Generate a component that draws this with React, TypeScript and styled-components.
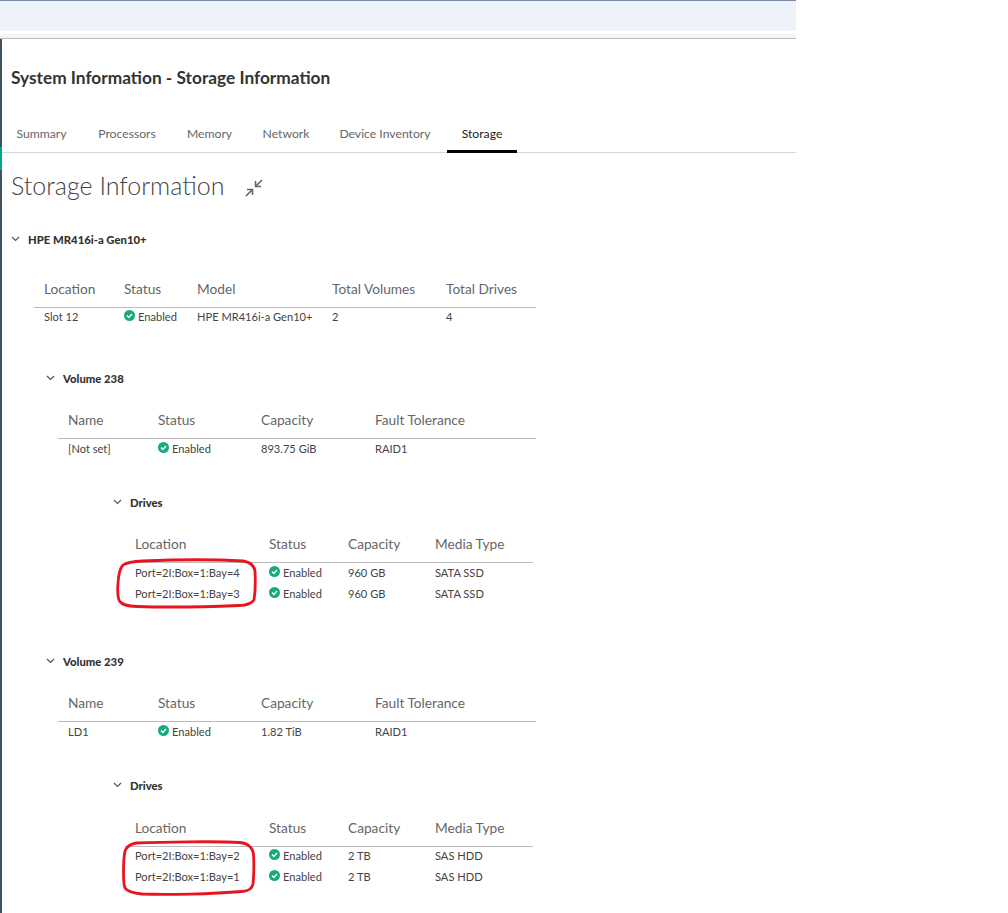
import React from "react";
import styled, { createGlobalStyle } from "styled-components";

const Global = createGlobalStyle`
  html, body { margin: 0; padding: 0; background: #fff; }
  body { font-family: "Lato", "Open Sans", sans-serif; color: #333; }
`;

const Page = styled.div`
  width: 796px;
  height: 913px;
  overflow: hidden;
  display: flex;
  flex-direction: column;
`;
const TopBar = styled.div`
  height: 30px;
  flex: none;
  background: #eef3fa;
  border-top: 1px solid #7a8ca3;
`;
const TopGap = styled.div`
  height: 7px;
  flex: none;
  background: linear-gradient(#fff 0 3px, #f5f5f5 3px);
  border-bottom: 1px solid #bbb;
`;
const Body = styled.div`
  display: flex;
  flex: 1;
  min-height: 0;
`;
const Rail = styled.div`
  width: 2px;
  flex: none;
  background: #3d5361;
`;
const RailMark = styled.div`
  height: 23px;
  margin-top: 108px;
  background: #01a982;
`;
const Main = styled.main`
  flex: 1;
  min-width: 0;
`;
const PageTitle = styled.h1`
  margin: 0;
  padding: 29px 0 0 9px;
  height: 51px;
  font-size: 17.3px;
  line-height: 20px;
  font-weight: 700;
  color: #333;
`;
const Tabs = styled.nav`
  display: flex;
  height: 34px;
  box-sizing: border-box;
  border-bottom: 1px solid #d8d8d8;
`;
const Tab = styled.div<{ $active?: boolean; $w: number; $after?: number }>`
  width: ${(p) => p.$w}px;
  margin-right: ${(p) => p.$after ?? 0}px;
  height: 34px;
  box-sizing: border-box;
  text-align: center;
  font-size: 12.2px;
  line-height: 30px;
  color: ${(p) => (p.$active ? "#222" : "#666")};
  border-bottom: ${(p) => (p.$active ? "3px solid #000" : "none")};
`;
const SectionTitle = styled.div`
  display: flex;
  align-items: center;
  gap: 20px;
  padding: 12px 0 0 9px;
  height: 40px;
`;
const BigTitle = styled.h2`
  margin: 0;
  font-size: 25px;
  line-height: 34px;
  font-weight: 300;
  color: #444;
`;
const CollapseSvg = styled.svg`
  margin-top: 5px;
`;
const Fold = styled.div<{ $left: number; $top: number }>`
  display: flex;
  align-items: center;
  gap: 8px;
  height: 16px;
  margin: ${(p) => p.$top}px 0 0 ${(p) => p.$left}px;
  font-size: 11.3px;
  font-weight: 900;
  color: #333;
`;
const Table = styled.div<{ $left: number; $top: number; $width: number; $cols: string }>`
  position: relative;
  width: ${(p) => p.$width}px;
  margin: ${(p) => p.$top}px 0 0 ${(p) => p.$left}px;
  display: grid;
  grid-template-columns: ${(p) => p.$cols};
`;
const Th = styled.div`
  height: 29px;
  padding: 0 0 0 10px;
  line-height: 22px;
  font-size: 13.7px;
  color: #666;
  border-bottom: 1px solid #bbb;
  white-space: nowrap;
`;
const Td = styled.div<{ $snug?: boolean }>`
  height: 21px;
  box-sizing: border-box;
  padding: 0 0 ${(p) => (p.$snug ? 4 : 2)}px 10px;
  display: flex;
  align-items: center;
  gap: 3px;
  font-size: 11.1px;
  color: #444;
  white-space: nowrap;
`;
const CheckSvg = styled.svg`
  margin-top: -3px;
`;
const Oval = styled.svg<{ $x: number; $y: number }>`
  position: absolute;
  left: ${(p) => p.$x}px;
  top: ${(p) => p.$y}px;
  overflow: visible;
  pointer-events: none;
  fill: none;
  stroke: #e8141f;
  stroke-width: 2.8;
`;

const ChevronIcon = () => (
  <svg width="9" height="6" viewBox="0 0 9 6" fill="none" stroke="#555" strokeWidth="1.2">
    <path d="M1 1l3.5 3.5L8 1" />
  </svg>
);
const CheckIcon = () => (
  <CheckSvg width="11" height="11" viewBox="0 0 11 11">
    <circle cx="5.5" cy="5.5" r="5.5" fill="#17a97f" />
    <path d="M3 5.6l1.8 1.8L8 4" fill="none" stroke="#fff" strokeWidth="1.4" />
  </CheckSvg>
);
const CollapseIcon = () => (
  <CollapseSvg width="20" height="20" viewBox="0 0 20 20" fill="none" stroke="#666" strokeWidth="1.6">
    <path d="M18 2l-6.5 6.5M11.500 3v5.500H17M2 18l6.500-6.500M3 11.500h5.500V17" />
  </CollapseSvg>
);

const Status = () => (
  <>
    <CheckIcon />
    Enabled
  </>
);

const tabs: [string, number, number][] = [
  ["Summary", 79, 0],
  ["Processors", 92, 0],
  ["Memory", 73, 0],
  ["Network", 80, 0],
  ["Device Inventory", 118, 3],
  ["Storage", 70, 0],
];

const driveCols = "134px 79px 87px 108px";
const volCols = "90px 103px 114px 171px";

type Row = string[];
const Grid = ({ left, top, width, cols, head, rows, snug, children }: {
  left: number; top: number; width: number; cols: string; head: string[]; rows: Row[]; snug?: boolean; children?: React.ReactNode;
}) => (
  <Table $left={left} $top={top} $width={width} $cols={cols}>
    {head.map((h) => <Th key={h}>{h}</Th>)}
    {rows.map((r, i) =>
      r.map((c, j) => <Td key={`${i}-${j}`} $snug={snug}>{c === "Enabled" ? <Status /> : c}</Td>)
    )}
    {children}
  </Table>
);

export default function App() {
  return (
    <Page>
      <Global />
      <TopBar />
      <TopGap />
      <Body>
        <Rail><RailMark /></Rail>
        <Main>
          <PageTitle>System Information - Storage Information</PageTitle>
          <Tabs>
            {tabs.map(([t, w, a]) => (
              <Tab key={t} $w={w} $after={a} $active={t === "Storage"}>{t}</Tab>
            ))}
          </Tabs>
          <SectionTitle>
            <BigTitle>Storage Information</BigTitle>
            <CollapseIcon />
          </SectionTitle>

          <Fold $left={9} $top={26}><ChevronIcon />HPE MR416i-a Gen10+</Fold>
          <Grid left={32} top={31} width={502} cols="80px 73px 135px 114px 100px" snug
            head={["Location", "Status", "Model", "Total Volumes", "Total Drives"]}
            rows={[["Slot 12", "Enabled", "HPE MR416i-a Gen10+", "2", "4"]]} />

          <Fold $left={44} $top={41}><ChevronIcon />Volume 238</Fold>
          <Grid left={56} top={23} width={478} cols={volCols}
            head={["Name", "Status", "Capacity", "Fault Tolerance"]}
            rows={[["[Not set]", "Enabled", "893.75 GiB", "RAID1"]]} />

          <Fold $left={111} $top={34}><ChevronIcon />Drives</Fold>
          <Grid left={123} top={23} width={408} cols={driveCols}
            head={["Location", "Status", "Capacity", "Media Type"]}
            rows={[
              ["Port=2I:Box=1:Bay=4", "Enabled", "960 GB", "SATA SSD"],
              ["Port=2I:Box=1:Bay=3", "Enabled", "960 GB", "SATA SSD"],
            ]}>
            <Oval $x={-8} $y={26} width="138" height="49" viewBox="0 0 138 49">
              <path d="M6 6C10 3 16 2.500 26 2 C60 .500 100 .500 126 2 C133 3 137 6 138 12 C138.500 22 138.500 32 137 41 C134 45 130 46 122 46.500 C85 48 50 48.500 20 47.500 C10 47 5 46 2.500 42 C.500 38 .500 30 1 24 C1.500 16 3 9 6 6z" />
            </Oval>
          </Grid>

          <Fold $left={44} $top={48}><ChevronIcon />Volume 239</Fold>
          <Grid left={56} top={23} width={478} cols={volCols}
            head={["Name", "Status", "Capacity", "Fault Tolerance"]}
            rows={[["LD1", "Enabled", "1.82 TiB", "RAID1"]]} />

          <Fold $left={111} $top={34}><ChevronIcon />Drives</Fold>
          <Grid left={123} top={24} width={408} cols={driveCols} snug
            head={["Location", "Status", "Capacity", "Media Type"]}
            rows={[
              ["Port=2I:Box=1:Bay=2", "Enabled", "2 TB", "SAS HDD"],
              ["Port=2I:Box=1:Bay=1", "Enabled", "2 TB", "SAS HDD"],
            ]}>
            <Oval $x={-3} $y={24} width="133" height="55" viewBox="0 0 133 55">
              <path d="M3 10C5 5 8 3 14 2 C40 1 95 0 118 1.500 C126 2 131 7 131.500 13 C132 22 132 34 131 43 C130 48 127 50 120 50.500 C90 53 45 54 20 53 C10 52 5 50 3 47 C1 43 1 20 3 10z" />
            </Oval>
          </Grid>
        </Main>
      </Body>
    </Page>
  );
}
